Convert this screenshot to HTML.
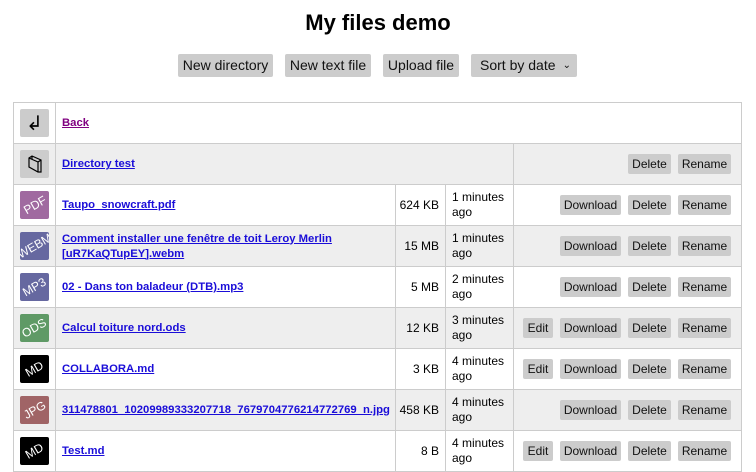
<!DOCTYPE html>
<html><head><meta charset="utf-8"><style>
body{margin:0;width:756px;height:462px;overflow:hidden;background:#fff;font-family:"Liberation Sans",Arial,sans-serif;position:relative}
h1{position:absolute;top:10px;left:0;width:756px;margin:0;text-align:center;font-size:22px;font-weight:bold}
.tb{position:absolute;top:54px;height:23px;background:#ccc;border-radius:2px;font-size:14px;line-height:23px;text-align:center;color:#111}
table{position:absolute;top:102px;left:13px;border-collapse:collapse;table-layout:fixed;width:728px}
td{border:1px solid #ccc;height:40px;padding:0;font-size:12px;vertical-align:middle}
tr.g td{background:#eee}
.i{width:29px;height:28px;margin-left:6px;border-radius:2px;background:#ccc;color:#fff;font-size:12px;display:flex;align-items:center;justify-content:center;overflow:hidden}
.i span{transform:rotate(-30deg);display:block}
a{color:#1a0dd8;font-weight:bold;font-size:11.3px;margin-left:6px;display:block;text-decoration:underline;line-height:15px;padding-top:1px}
td.s{text-align:right;padding-right:6px}
td.d{padding-left:6px;line-height:15px}
td.a{text-align:right;padding-right:10px;white-space:nowrap;font-size:0}
.b{display:inline-block;background:#ccc;border-radius:2px;height:20px;line-height:20px;margin-left:7px;font-size:12px;color:#111;text-align:center;vertical-align:middle}
.e{width:30px}.dl{width:61px}.de{width:43px}.r{width:53px}
</style></head><body>
<h1>My files demo</h1>
<div class="tb" style="left:178px;width:95px">New directory</div>
<div class="tb" style="left:285px;width:86px">New text file</div>
<div class="tb" style="left:383px;width:76px">Upload file</div>
<div class="tb" style="left:471px;width:106px;text-align:left"><span style="margin-left:9px">Sort by date</span><span style="position:absolute;right:6px;font-size:10px">&#8964;</span></div>
<table>
<colgroup><col style="width:42px"><col style="width:340px"><col style="width:50px"><col style="width:68px"><col style="width:228px"></colgroup>
<tr><td><div class="i" style="color:#000;font-size:20px">&#8626;</div></td><td colspan="4"><a style="color:#800080">Back</a></td></tr>
<tr class="g"><td><div class="i"><svg width="16" height="18" viewBox="0 0 16 18"><path d="M2 3 L5 1 L14 5 L14 17 L11 17 L2 12 Z M5 1 L5 4 M2 3 L11 7 L11 17 M11 7 L14 5" fill="none" stroke="#000" stroke-width="1.2"/></svg></div></td><td colspan="3"><a>Directory test</a></td><td class="a"><span class="b de">Delete</span><span class="b r">Rename</span></td></tr>
<tr><td><div class="i" style="background:#a06aa0"><span>PDF</span></div></td><td><a>Taupo_snowcraft.pdf</a></td><td class="s">624 KB</td><td class="d">1 minutes<br>ago</td><td class="a"><span class="b dl">Download</span><span class="b de">Delete</span><span class="b r">Rename</span></td></tr>
<tr class="g"><td><div class="i" style="background:#6668a0"><span>WEBM</span></div></td><td><a>Comment installer une fenêtre de toit Leroy Merlin [uR7KaQTupEY].webm</a></td><td class="s">15 MB</td><td class="d">1 minutes<br>ago</td><td class="a"><span class="b dl">Download</span><span class="b de">Delete</span><span class="b r">Rename</span></td></tr>
<tr><td><div class="i" style="background:#6668a0"><span>MP3</span></div></td><td><a>02 - Dans ton baladeur (DTB).mp3</a></td><td class="s">5 MB</td><td class="d">2 minutes<br>ago</td><td class="a"><span class="b dl">Download</span><span class="b de">Delete</span><span class="b r">Rename</span></td></tr>
<tr class="g"><td><div class="i" style="background:#5f9a66"><span>ODS</span></div></td><td><a>Calcul toiture nord.ods</a></td><td class="s">12 KB</td><td class="d">3 minutes<br>ago</td><td class="a"><span class="b e">Edit</span><span class="b dl">Download</span><span class="b de">Delete</span><span class="b r">Rename</span></td></tr>
<tr><td><div class="i" style="background:#000"><span>MD</span></div></td><td><a>COLLABORA.md</a></td><td class="s">3 KB</td><td class="d">4 minutes<br>ago</td><td class="a"><span class="b e">Edit</span><span class="b dl">Download</span><span class="b de">Delete</span><span class="b r">Rename</span></td></tr>
<tr class="g"><td><div class="i" style="background:#a06466"><span>JPG</span></div></td><td><a>311478801_10209989333207718_7679704776214772769_n.jpg</a></td><td class="s">458 KB</td><td class="d">4 minutes<br>ago</td><td class="a"><span class="b dl">Download</span><span class="b de">Delete</span><span class="b r">Rename</span></td></tr>
<tr><td><div class="i" style="background:#000"><span>MD</span></div></td><td><a>Test.md</a></td><td class="s">8 B</td><td class="d">4 minutes<br>ago</td><td class="a"><span class="b e">Edit</span><span class="b dl">Download</span><span class="b de">Delete</span><span class="b r">Rename</span></td></tr>
</table>
</body></html>
